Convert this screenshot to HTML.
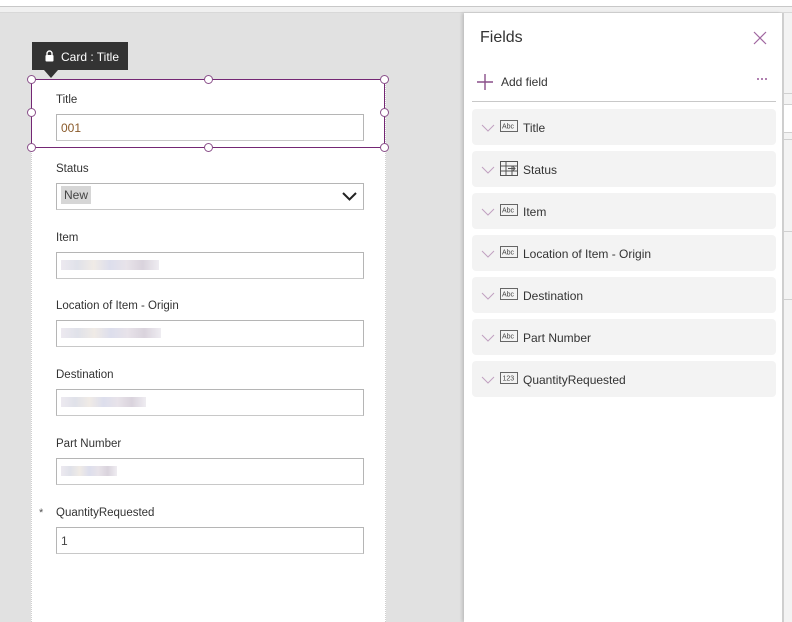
<!DOCTYPE html>
<html><head><style>
*{margin:0;padding:0;box-sizing:border-box}
html,body{width:792px;height:622px;overflow:hidden}
body{position:relative;background:#e1e1e1;font-family:"Liberation Sans",sans-serif;color:#333}
.a{position:absolute}
.lbl{position:absolute;left:56px;font-size:11.5px;color:#333}
.inp{position:absolute;left:56px;width:308px;height:27px;border:1px solid #b5b5b5;border-bottom-color:#c8c8c8;background:#fff;font-size:12px;padding:6px 4px;color:#444}
.blur{position:absolute;left:4px;top:7px;height:10px;background:linear-gradient(90deg,#e8e4ec,#d8dae4,#ece6e0,#d4d6e8,#e2dce4,#d0c8d4,#ebe8ee);opacity:.8}
.h{position:absolute;width:9px;height:9px;border:1.5px solid #8a4f8a;border-radius:50%;background:#fff}
.row{position:absolute;left:472px;width:304px;height:36px;background:#f3f3f3;border-radius:4px}
.row .t{position:absolute;left:51px;top:12px;font-size:12px;color:#333}
.row svg{position:absolute}
</style></head><body>
<div class="a" style="left:0;top:0;width:792px;height:6px;background:#fff"></div>
<div class="a" style="left:0;top:6px;width:792px;height:1px;background:#c8c8c8"></div>
<div class="a" style="left:0;top:7px;width:792px;height:5px;background:#f0f0f0"></div>
<div class="a" style="left:0;top:12px;width:792px;height:1px;background:#d8d8d8"></div>

<div class="a" style="left:31px;top:79px;width:355px;height:543px;background:#fff;border-left:1px dotted #cfcfcf;border-right:1px dotted #cfcfcf"></div>
<div class="a" style="left:31px;top:79px;width:354px;height:69px;border:1.5px solid #742774"></div>
<div class="h" style="left:27px;top:75px"></div><div class="h" style="left:204px;top:75px"></div><div class="h" style="left:380px;top:75px"></div>
<div class="h" style="left:27px;top:108px"></div><div class="h" style="left:380px;top:108px"></div>
<div class="h" style="left:27px;top:143px"></div><div class="h" style="left:204px;top:143px"></div><div class="h" style="left:380px;top:143px"></div>
<div class="a" style="left:32px;top:42px;width:96px;height:28px;background:#333"></div>
<div class="a" style="left:44px;top:70px;width:0;height:0;border-left:7px solid transparent;border-right:7px solid transparent;border-top:8px solid #333"></div>
<svg class="a" style="left:45px;top:50px" width="9" height="12" viewBox="0 0 9 12"><path d="M2 5V3.5a2.5 2.5 0 0 1 5 0V5" stroke="#fff" stroke-width="1.4" fill="none"/><rect x="0.5" y="5" width="8" height="6.5" rx="1" fill="#fff"/></svg>
<div class="a" style="left:61px;top:50px;font-size:12px;color:#fff">Card : Title</div>

<div class="lbl" style="top:94px">Title</div>
<div class="inp" style="top:114px;color:#8a5a2a">001</div>
<div class="lbl" style="top:163px">Status</div>
<div class="inp" style="top:183px;padding:4px"><span style="background:#d6d6d6;padding:2px 3px;color:#444">New</span>
<svg style="position:absolute;right:6px;top:8px" width="15" height="9" viewBox="0 0 15 9"><path d="M1 1l6.5 6.5L14 1" stroke="#222" stroke-width="2" fill="none"/></svg></div>
<div class="lbl" style="top:232px">Item</div>
<div class="inp" style="top:252px"><div class="blur" style="width:98px"></div></div>
<div class="lbl" style="top:300px">Location of Item - Origin</div>
<div class="inp" style="top:320px"><div class="blur" style="width:100px"></div></div>
<div class="lbl" style="top:369px">Destination</div>
<div class="inp" style="top:389px"><div class="blur" style="width:85px"></div></div>
<div class="lbl" style="top:438px">Part Number</div>
<div class="inp" style="top:458px"><div class="blur" style="width:56px"></div></div>
<div class="a" style="left:39px;top:507px;font-size:11px;color:#555">*</div>
<div class="lbl" style="top:507px">QuantityRequested</div>
<div class="inp" style="top:527px">1</div>

<div class="a" style="left:782px;top:13px;width:2px;height:609px;background:#cfcfcf"></div>
<div class="a" style="left:784px;top:13px;width:8px;height:609px;background:#f3f3f3"></div>
<div class="a" style="left:784px;top:104px;width:8px;height:28px;background:#fff"></div>
<div class="a" style="left:784px;top:93px;width:8px;height:1px;background:#d0d0d0"></div>
<div class="a" style="left:784px;top:104px;width:8px;height:1px;background:#d0d0d0"></div>
<div class="a" style="left:784px;top:132px;width:8px;height:1px;background:#d0d0d0"></div>
<div class="a" style="left:784px;top:139px;width:8px;height:1px;background:#d0d0d0"></div>
<div class="a" style="left:784px;top:231px;width:8px;height:1px;background:#d0d0d0"></div>
<div class="a" style="left:784px;top:299px;width:8px;height:1px;background:#d0d0d0"></div>

<div class="a" style="left:464px;top:13px;width:318px;height:609px;background:#fff;box-shadow:-2px 0 3px rgba(0,0,0,.15)"></div>
<div class="a" style="left:480px;top:29px;font-size:16px;color:#333">Fields</div>
<svg class="a" style="left:753px;top:31px" width="14" height="14" viewBox="0 0 14 14"><path d="M1 1l12 12M13 1L1 13" stroke="#a066a0" stroke-width="1.2"/></svg>
<svg class="a" style="left:476px;top:73px" width="18" height="18" viewBox="0 0 18 18"><path d="M9 1v16M1 9h16" stroke="#8a4f8a" stroke-width="1.4"/></svg>
<div class="a" style="left:501px;top:75px;font-size:12px;color:#333">Add field</div>
<svg class="a" style="left:757px;top:78px" width="10" height="3"><rect x="0" y="0" width="2" height="2" fill="#b080b0"/><rect x="4" y="0" width="2" height="2" fill="#b080b0"/><rect x="8" y="0" width="2" height="2" fill="#b080b0"/></svg>
<div class="a" style="left:472px;top:101px;width:304px;height:1px;background:#c8c8c8"></div>

<div class="row" style="top:109px"><svg style="left:9px;top:15px" width="14" height="8"><path d="M1 1l6 6 6-6" stroke="#c0a0c0" fill="none"/></svg><svg style="left:28px;top:11px" width="18" height="13"><rect x=".5" y=".5" width="17" height="11" fill="none" stroke="#666"/><text x="2" y="8.5" font-size="7" font-family="Liberation Sans" fill="#444">Abc</text></svg><span class="t">Title</span></div>
<div class="row" style="top:151px"><svg style="left:9px;top:15px" width="14" height="8"><path d="M1 1l6 6 6-6" stroke="#c0a0c0" fill="none"/></svg><svg style="left:28px;top:10px" width="18" height="15"><path d="M.5 .5h17v14H.5zM.5 5h17M.5 10h17M6 .5v14M12 5v9M8 7.5h7M13 5.5l2 2-2 2" stroke="#555" fill="none"/></svg><span class="t">Status</span></div>
<div class="row" style="top:193px"><svg style="left:9px;top:15px" width="14" height="8"><path d="M1 1l6 6 6-6" stroke="#c0a0c0" fill="none"/></svg><svg style="left:28px;top:11px" width="18" height="13"><rect x=".5" y=".5" width="17" height="11" fill="none" stroke="#666"/><text x="2" y="8.5" font-size="7" font-family="Liberation Sans" fill="#444">Abc</text></svg><span class="t">Item</span></div>
<div class="row" style="top:235px"><svg style="left:9px;top:15px" width="14" height="8"><path d="M1 1l6 6 6-6" stroke="#c0a0c0" fill="none"/></svg><svg style="left:28px;top:11px" width="18" height="13"><rect x=".5" y=".5" width="17" height="11" fill="none" stroke="#666"/><text x="2" y="8.5" font-size="7" font-family="Liberation Sans" fill="#444">Abc</text></svg><span class="t">Location of Item - Origin</span></div>
<div class="row" style="top:277px"><svg style="left:9px;top:15px" width="14" height="8"><path d="M1 1l6 6 6-6" stroke="#c0a0c0" fill="none"/></svg><svg style="left:28px;top:11px" width="18" height="13"><rect x=".5" y=".5" width="17" height="11" fill="none" stroke="#666"/><text x="2" y="8.5" font-size="7" font-family="Liberation Sans" fill="#444">Abc</text></svg><span class="t">Destination</span></div>
<div class="row" style="top:319px"><svg style="left:9px;top:15px" width="14" height="8"><path d="M1 1l6 6 6-6" stroke="#c0a0c0" fill="none"/></svg><svg style="left:28px;top:11px" width="18" height="13"><rect x=".5" y=".5" width="17" height="11" fill="none" stroke="#666"/><text x="2" y="8.5" font-size="7" font-family="Liberation Sans" fill="#444">Abc</text></svg><span class="t">Part Number</span></div>
<div class="row" style="top:361px"><svg style="left:9px;top:15px" width="14" height="8"><path d="M1 1l6 6 6-6" stroke="#c0a0c0" fill="none"/></svg><svg style="left:28px;top:11px" width="18" height="13"><rect x=".5" y=".5" width="17" height="11" fill="none" stroke="#666"/><text x="2.5" y="8.5" font-size="7" font-family="Liberation Sans" fill="#444">123</text></svg><span class="t">QuantityRequested</span></div>
</body></html>
